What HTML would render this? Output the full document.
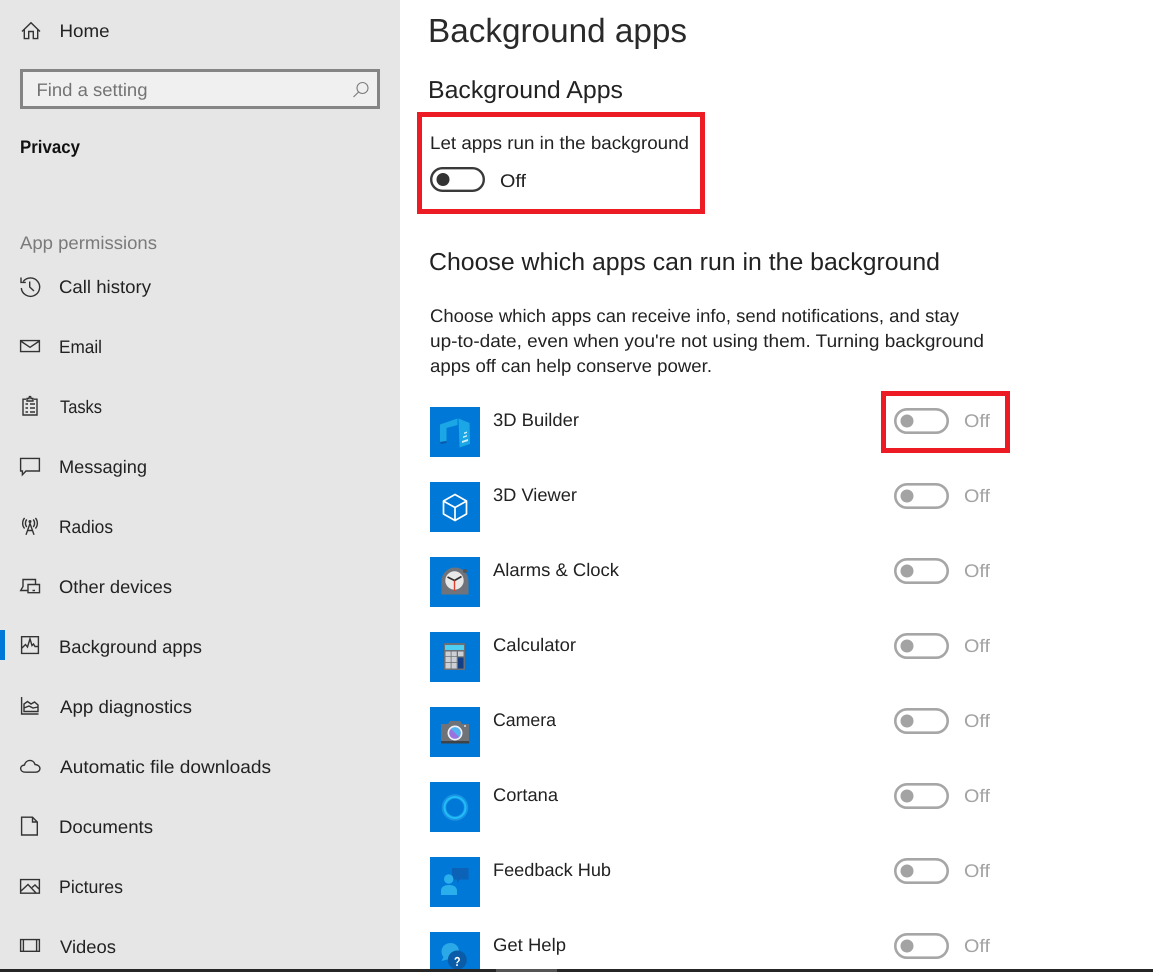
<!DOCTYPE html>
<html><head><meta charset="utf-8"><title>Background apps</title>
<style>
html,body{margin:0;padding:0;background:#fff;width:1153px;height:972px;overflow:hidden}
svg{display:block}
text{font-family:"Liberation Sans",sans-serif;font-size:18.2px;fill:#222}
.g{fill:#a3a3a3}
.ic{fill:none;stroke:#333;stroke-width:1.4}
.tg{fill:none;stroke:#a6a6a6;stroke-width:2.6}
</style></head><body>
<svg width="1153" height="972" viewBox="0 0 1153 972" xmlns="http://www.w3.org/2000/svg" text-rendering="geometricPrecision">
<defs>
<g id="t"><rect x="895.3" y="409.3" width="52.4" height="23.4" rx="11.7" class="tg"/><circle cx="907" cy="421" r="6.5" fill="#a3a3a3"/></g>
</defs>
<rect width="1153" height="972" fill="#fff"/>
<rect width="400" height="972" fill="#e6e6e6"/>
<rect x="0" y="630" width="5" height="30" fill="#0078d7"/>

<!-- sidebar text -->
<text x="59.5" y="37" textLength="50" lengthAdjust="spacingAndGlyphs">Home</text>
<rect x="21.5" y="70.5" width="357" height="37" fill="#f0f0f0" stroke="#858585" stroke-width="3"/>
<text x="36.5" y="96" textLength="111" lengthAdjust="spacingAndGlyphs" style="fill:#737373">Find a setting</text>
<text x="20" y="153" textLength="60" lengthAdjust="spacingAndGlyphs" style="font-weight:700;fill:#111">Privacy</text>
<text x="20" y="249" textLength="137" lengthAdjust="spacingAndGlyphs" style="fill:#7a7a7a">App permissions</text>
<text x="59" y="293" textLength="92" lengthAdjust="spacingAndGlyphs">Call history</text>
<text x="59" y="353" textLength="43" lengthAdjust="spacingAndGlyphs">Email</text>
<text x="60" y="413" textLength="42" lengthAdjust="spacingAndGlyphs">Tasks</text>
<text x="59" y="473" textLength="88" lengthAdjust="spacingAndGlyphs">Messaging</text>
<text x="59" y="533" textLength="54" lengthAdjust="spacingAndGlyphs">Radios</text>
<text x="59" y="593" textLength="113" lengthAdjust="spacingAndGlyphs">Other devices</text>
<text x="59" y="653" textLength="143" lengthAdjust="spacingAndGlyphs">Background apps</text>
<text x="60" y="713" textLength="132" lengthAdjust="spacingAndGlyphs">App diagnostics</text>
<text x="60" y="773" textLength="211" lengthAdjust="spacingAndGlyphs">Automatic file downloads</text>
<text x="59" y="833" textLength="94" lengthAdjust="spacingAndGlyphs">Documents</text>
<text x="59" y="893" textLength="64" lengthAdjust="spacingAndGlyphs">Pictures</text>
<text x="60" y="953" textLength="56" lengthAdjust="spacingAndGlyphs">Videos</text>

<!-- sidebar icons -->
<path class="ic" d="M22 31.5 31 22.7 40 31.5M24.3 29.5V38.6H28.7V31.5H33.3V38.6H37.7V29.5"/>
<circle cx="362.5" cy="88" r="5.5" fill="none" stroke="#7d7d7d" stroke-width="1.1"/>
<path d="M358.6 92 353.5 97" fill="none" stroke="#7d7d7d" stroke-width="1.2"/>
<path class="ic" d="M23.2 281.5A9.2 9.2 0 1 1 21.3 288M21 277.5V282.4H25.8M29.7 281.5V287L34 291"/>
<path class="ic" d="M20.6 340.6H39.4V351.6H20.6ZM20.6 341 30 347.3 39.4 341"/>
<path class="ic" d="M26 399.2H23V415H37V399.2H34M27 401V398.5H29C29 395.8 31 395.8 31 398.5H33V401ZM25.5 404H28M30 404H35M25.5 408H28M30 408H35M25.5 412H28M30 412H35"/>
<path class="ic" d="M20.6 458.4H39.4V471H26L22.4 474.8V471H20.6Z"/>
<path class="ic" d="M30 522.6V524M26 534.8 30 523.5 34 534.8M27.5 530.5H32.5M26.8 519.5C25 521.5 25 525 26.8 527M33.2 519.5C35 521.5 35 525 33.2 527M24.6 518C22 521 22 525.5 24.6 528.5M35.4 518C38 521 38 525.5 35.4 528.5"/>
<circle cx="30" cy="521.5" r="1.5" fill="#333"/>
<path class="ic" d="M28 590.5H20.7L23 586.5V579.5H35.5V584.5M28 584.5H39.5V592.7H28ZM32.5 590.5H35"/>
<path class="ic" d="M21.6 636.7H38.4V653.4H21.6ZM22 648 25.5 644.5 27.5 647 30 638.8 32 645.5 33.5 644 35 646.5H38"/>
<path class="ic" d="M21.6 697V714H38.5M24 711.5V704L27.5 701.5 31 704 34.5 702 38 705V711.5ZM24 708 29 706 33 708 38 707"/>
<path class="ic" d="M25.5 772.2C19.5 772.2 19 765.5 24.5 765C26 759 33.5 759 35 764.5C41.5 765 41.5 772.2 35.5 772.2Z"/>
<path class="ic" d="M21.6 817.2H32.5L37.3 822V835H21.6ZM32.5 817.2V822H37.3"/>
<path class="ic" d="M20.6 879.6H39.4V893.2H20.6ZM21 891 28 884.5 36 893M32 887.5 35 885 39 889"/>
<path class="ic" d="M20.6 939.6H39.4V951.3H20.6ZM23.4 939.6V951.3M36.6 939.6V951.3"/>

<!-- headings -->
<text x="428" y="42" textLength="259" lengthAdjust="spacingAndGlyphs" style="font-size:33.5px;fill:#2a2a2a">Background apps</text>
<text x="428" y="98" textLength="195" lengthAdjust="spacingAndGlyphs" style="font-size:24.5px;fill:#222">Background Apps</text>
<text x="430" y="149" textLength="259" lengthAdjust="spacingAndGlyphs">Let apps run in the background</text>
<rect x="431.2" y="168.2" width="52.6" height="22.6" rx="11.3" fill="none" stroke="#3a3a3a" stroke-width="2.4"/>
<circle cx="443" cy="179.5" r="6.5" fill="#333"/>
<text x="500" y="187" textLength="26" lengthAdjust="spacingAndGlyphs">Off</text>
<rect x="419.5" y="114.5" width="283" height="97" fill="none" stroke="#ed1c24" stroke-width="5"/>

<text x="429" y="270" textLength="511" lengthAdjust="spacingAndGlyphs" style="font-size:24.5px;fill:#222">Choose which apps can run in the background</text>
<text x="430" y="322" textLength="529" lengthAdjust="spacingAndGlyphs">Choose which apps can receive info, send notifications, and stay</text>
<text x="430" y="347" textLength="554" lengthAdjust="spacingAndGlyphs">up-to-date, even when you're not using them. Turning background</text>
<text x="430" y="372" textLength="282" lengthAdjust="spacingAndGlyphs">apps off can help conserve power.</text>

<!-- app tiles -->
<g fill="#0078d7">
<rect x="430" y="407" width="50" height="50"/><rect x="430" y="482" width="50" height="50"/>
<rect x="430" y="557" width="50" height="50"/><rect x="430" y="632" width="50" height="50"/>
<rect x="430" y="707" width="50" height="50"/><rect x="430" y="782" width="50" height="50"/>
<rect x="430" y="857" width="50" height="50"/><rect x="430" y="932" width="50" height="40"/>
</g>
<!-- 3D Builder -->
<path d="M440 424.5 457.5 418.5V425L446.5 428V441L440 442Z" fill="#1ba6e6"/>
<path d="M440 442 446.5 441V443L441 444Z" fill="#0a5ba8"/>
<path d="M458.5 418.5 469.5 423 470 444 459.5 447.5Z" fill="#1ba6e6"/>
<path d="M462 443 468 441V439L462 441ZM463 438 467 436.5V435L463 436.5ZM464 434 467 433V431.5L464 432.5Z" fill="#cdeefb"/>
<!-- 3D Viewer -->
<path d="M455 494.5 466.5 501V514L455 520.5 443.5 514V501ZM443.8 501.2 455 507.5 466.2 501.2M455 507.5V520" fill="none" stroke="#fff" stroke-width="1.7" stroke-linejoin="round"/>
<!-- Clock -->
<path d="M441.5 594.5V581A13 13 0 0 1 468.5 581V594.5Z" fill="#70747a"/>
<circle cx="465" cy="571" r="2" fill="#555"/>
<circle cx="454.5" cy="580.5" r="9.2" fill="#e9e9e9"/>
<path d="M454.5 580.5 447.5 577M454.5 580.5 461.5 576.5" stroke="#333" stroke-width="1.8" fill="none"/>
<path d="M454.5 580.5V591" stroke="#e0402a" stroke-width="1.4"/>
<!-- Calculator -->
<rect x="444" y="643" width="21" height="27" rx="1" fill="#6b7077"/>
<rect x="445" y="645" width="19" height="5" fill="#4fd0f2"/>
<g fill="#ccd0d4"><rect x="445.5" y="651.5" width="5.2" height="4.8"/><rect x="451.5" y="651.5" width="5.2" height="4.8"/><rect x="458" y="651.5" width="5.5" height="4.8"/>
<rect x="445.5" y="657" width="5.2" height="5.2"/><rect x="451.5" y="657" width="5.2" height="5.2"/>
<rect x="445.5" y="663" width="5.2" height="5.5"/><rect x="451.5" y="663" width="5.2" height="5.5"/></g>
<rect x="458" y="657.5" width="5.5" height="11" fill="#123f86"/>
<!-- Camera -->
<path d="M441 724H448L450 721H460L462 724H469V743H441Z" fill="#6f7276"/>
<rect x="441" y="741" width="28" height="2.5" fill="#3f4347"/>
<circle cx="455" cy="733" r="7.5" fill="#eef3f8"/>
<circle cx="455" cy="733" r="5.8" fill="#9a72e0"/>
<path d="M455 727.2A5.8 5.8 0 0 1 459 737L451 729A5.8 5.8 0 0 1 455 727.2Z" fill="#4fb4f0"/>
<circle cx="465" cy="726" r="1" fill="#ddd"/>
<!-- Cortana -->
<circle cx="455" cy="807.5" r="11" fill="none" stroke="#1a93e4" stroke-width="4.5"/>
<circle cx="455" cy="807.5" r="10.5" fill="none" stroke="#20bdf6" stroke-width="2"/>
<!-- Feedback Hub -->
<path d="M452 868H468.5V879.5H460L457 883V879.5H452Z" fill="#0b62b6"/>
<circle cx="448.7" cy="879" r="4.7" fill="#2aaeec"/>
<path d="M441 895V891C441 887 444 885 449 885S457 887 457 891V895Z" fill="#2aaeec"/>
<!-- Get Help -->
<path d="M450.5 943C444.5 943 441.5 947.5 441.5 951.5C441.5 954 442.5 956 443.5 957L441.5 961L447 959.5C449 960.5 459 960 459 951.5C459 947 456 943 450.5 943Z" fill="#2aa8e8"/>
<circle cx="457.3" cy="960" r="9.5" fill="#0a5ca8"/>
<text x="454" y="966" textLength="6.5" lengthAdjust="spacingAndGlyphs" style="font-size:13px;font-weight:700;fill:#fff">?</text>

<!-- app names -->
<text x="493" y="426" textLength="86" lengthAdjust="spacingAndGlyphs">3D Builder</text>
<text x="493" y="501" textLength="84" lengthAdjust="spacingAndGlyphs">3D Viewer</text>
<text x="493" y="576" textLength="126" lengthAdjust="spacingAndGlyphs">Alarms &amp; Clock</text>
<text x="493" y="651" textLength="83" lengthAdjust="spacingAndGlyphs">Calculator</text>
<text x="493" y="726" textLength="63" lengthAdjust="spacingAndGlyphs">Camera</text>
<text x="493" y="801" textLength="65" lengthAdjust="spacingAndGlyphs">Cortana</text>
<text x="493" y="876" textLength="118" lengthAdjust="spacingAndGlyphs">Feedback Hub</text>
<text x="493" y="951" textLength="73" lengthAdjust="spacingAndGlyphs">Get Help</text>

<!-- toggles -->
<use href="#t"/><use href="#t" y="75"/><use href="#t" y="150"/><use href="#t" y="225"/>
<use href="#t" y="300"/><use href="#t" y="375"/><use href="#t" y="450"/><use href="#t" y="525"/>
<text class="g" x="964" y="427" textLength="26" lengthAdjust="spacingAndGlyphs">Off</text>
<text class="g" x="964" y="502" textLength="26" lengthAdjust="spacingAndGlyphs">Off</text>
<text class="g" x="964" y="577" textLength="26" lengthAdjust="spacingAndGlyphs">Off</text>
<text class="g" x="964" y="652" textLength="26" lengthAdjust="spacingAndGlyphs">Off</text>
<text class="g" x="964" y="727" textLength="26" lengthAdjust="spacingAndGlyphs">Off</text>
<text class="g" x="964" y="802" textLength="26" lengthAdjust="spacingAndGlyphs">Off</text>
<text class="g" x="964" y="877" textLength="26" lengthAdjust="spacingAndGlyphs">Off</text>
<text class="g" x="964" y="952" textLength="26" lengthAdjust="spacingAndGlyphs">Off</text>
<rect x="883.5" y="393.5" width="124" height="57" fill="none" stroke="#ed1c24" stroke-width="5"/>

<!-- bottom bar -->
<rect x="0" y="969" width="1153" height="3" fill="#262626"/>
<rect x="496" y="969" width="61" height="3" fill="#555"/>
</svg>
</body></html>
